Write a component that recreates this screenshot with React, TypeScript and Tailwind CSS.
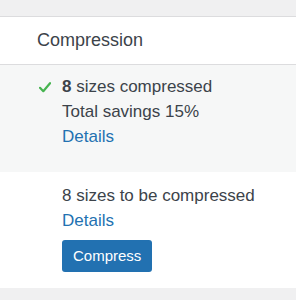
import React from "react";

export default function App() {
  return (
    <div
      className="w-[296px] h-[300px] bg-[#f0f0f1] text-[#3c434a] overflow-hidden"
      style={{ fontFamily: '"Liberation Sans", Arial, sans-serif' }}
    >
      <div className="h-[16px]" />
      <div className="bg-white border-y border-[#dcdcde] h-[49px] pl-[37px] flex items-center">
        <span className="text-[18px] leading-[47px]">Compression</span>
      </div>
      <div className="bg-[#f6f7f7] pt-[9px] pb-[23px] pl-[39px] flex">
        <div className="w-[23px] h-[25px] flex items-center">
          <svg width="12" height="11" viewBox="0 0 12 11" className="mt-[1px]">
            <path d="M1 5.8 L4.3 9.2 L11 1.2" fill="none" stroke="#46b450" strokeWidth="2.2" strokeLinecap="round" strokeLinejoin="round" />
          </svg>
        </div>
        <div className="text-[17px] leading-[25px]">
          <div>
            <span className="font-bold">8</span> sizes compressed
          </div>
          <div>Total savings 15%</div>
          <div className="text-[#2271b1]">Details</div>
        </div>
      </div>
      <div className="bg-white pt-[11px] pb-[16px] pl-[62px] text-[17px] leading-[25px]">
        <div>8 sizes to be compressed</div>
        <div className="text-[#2271b1]">Details</div>
        <button className="mt-[7px] h-[32px] px-[11px] rounded-[3px] bg-[#2271b1] text-white text-[15px] leading-[32px]">
          Compress
        </button>
      </div>
    </div>
  );
}
